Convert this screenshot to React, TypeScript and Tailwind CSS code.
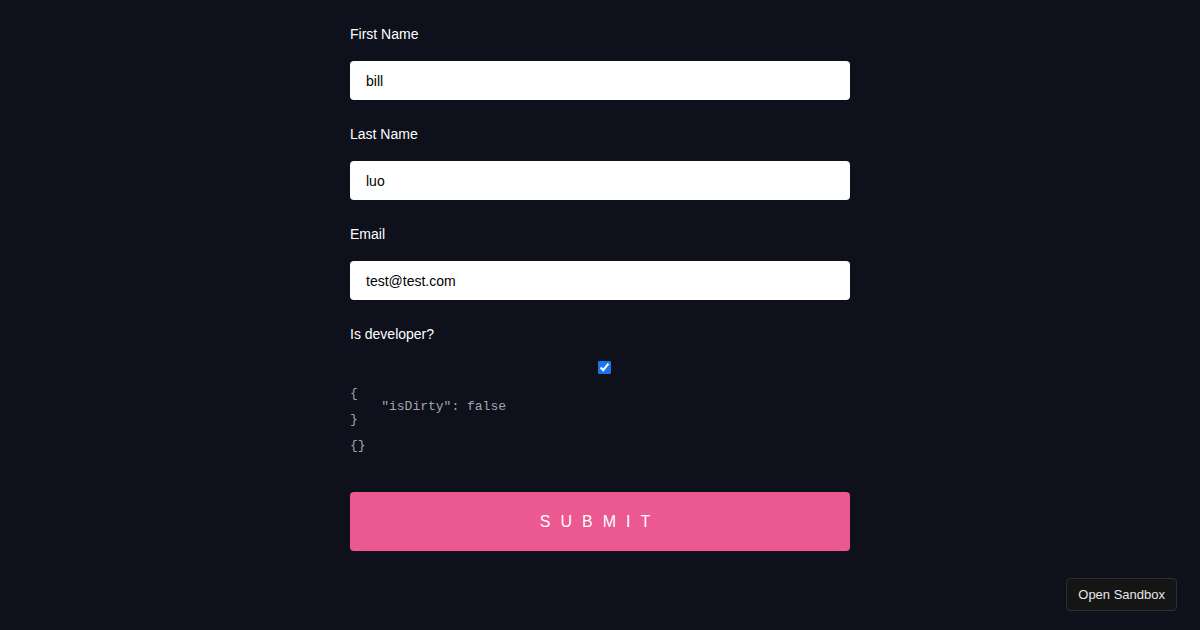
import React, { useState } from 'react';

const fields = [
    { label: 'First Name', value: 'bill' },
    { label: 'Last Name', value: 'luo' },
    { label: 'Email', value: 'test@test.com' },
];

export default function App() {
    const [dev, setDev] = useState(true);

    return (
        <div className="relative min-h-[630px] bg-[#0e101c] font-['Liberation_Sans',Arial,sans-serif]">
            <form className="mx-auto w-[500px] pt-[26px]" onSubmit={(e) => e.preventDefault()}>
                {fields.map((f, i) => (
                    <div key={f.label} className={i > 0 ? 'mt-[26px]' : ''}>
                        <label className="block text-[14px] leading-[16px] text-white mb-[19px]">{f.label}</label>
                        <input
                            defaultValue={f.value}
                            className="block w-full h-[39px] rounded-[4px] bg-white px-[16px] text-[14px] text-black outline-none"
                        />
                    </div>
                ))}

                {/* checkbox */}
                <label className="mt-[26px] block text-[14px] leading-[16px] text-white mb-[19px]">Is developer?</label>
                <div className="flex justify-center h-[13px] pl-[8px]">
                    <input
                        type="checkbox"
                        checked={dev}
                        onChange={() => setDev(!dev)}
                        className="m-0 w-[13px] h-[13px] accent-[#1a73e8]"
                    />
                </div>

                <pre className="mt-[13px] font-['Liberation_Mono',monospace] text-[13px] leading-[13px] text-[#a3a5ab]">
{`{
    "isDirty": false
}`}
                </pre>
                <pre className="mt-[13px] font-['Liberation_Mono',monospace] text-[13px] leading-[13px] text-[#a3a5ab]">{'{}'}</pre>

                <button
                    type="submit"
                    className="mt-[40px] block w-full h-[59px] rounded-[4px] bg-[#ec5990] text-white text-[16px] uppercase tracking-[10px]"
                >
                    Submit
                </button>
            </form>

            <button className="absolute right-[23px] bottom-[19px] h-[33px] px-[11px] rounded-[4px] border border-[#2e2e2e] bg-[#151515] text-[13px] text-[#e6e6e6]">
                Open Sandbox
            </button>
        </div>
    );
}
